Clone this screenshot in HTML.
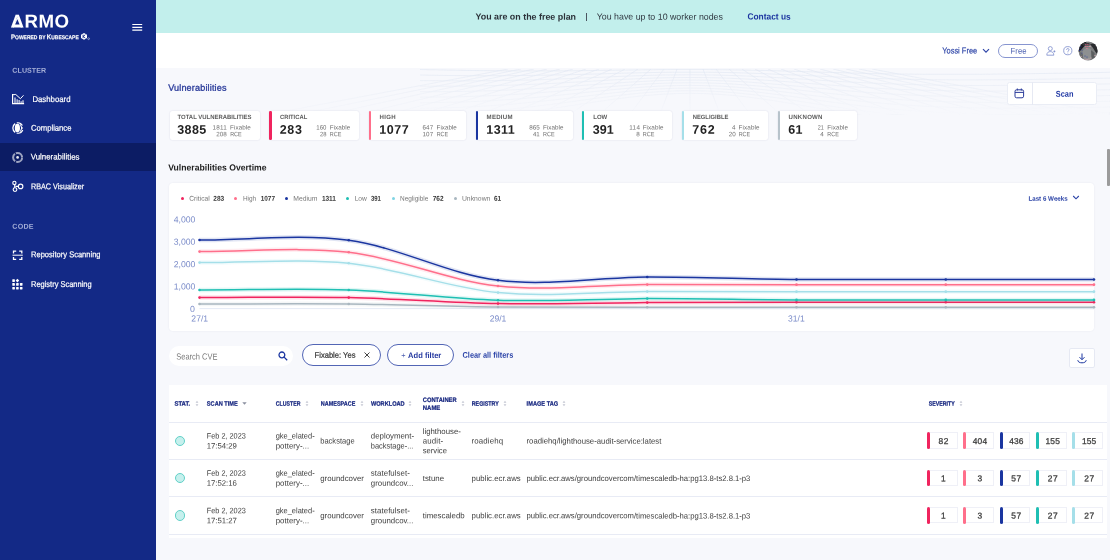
<!DOCTYPE html>
<html><head><meta charset="utf-8"><title>ARMO</title>
<style>
*{box-sizing:border-box;margin:0;padding:0}
html,body{width:1110px;height:560px;overflow:hidden;background:#f7f8fc;font-family:"Liberation Sans","DejaVu Sans",sans-serif;color:#333}
div,span{white-space:nowrap}
.t{position:absolute;left:0;top:0;line-height:1;transform-origin:0 0}
.a{position:absolute}
#root{position:absolute;left:0;top:0;width:1110px;height:560px;overflow:hidden;will-change:transform}
#side{position:absolute;left:0;top:0;width:156px;height:560px;background:#132986}
#banner{position:absolute;left:156px;top:0;width:954px;height:32.8px;background:#c2efec}
#topbar{position:absolute;left:156px;top:33px;width:954px;height:35px;background:#fff}
.card{position:absolute;top:110.5px;height:29.5px;background:#fff;border-radius:2px;box-shadow:0 0 1.5px rgba(20,30,90,.16)}
.bar{position:absolute;top:110.5px;width:2.3px;height:29.5px;border-radius:1.2px}
.pill{position:absolute;border:1px solid #5265b5;border-radius:12px;background:#fff}
.rowline{position:absolute;left:169px;width:937.5px;height:1px;background:#e8ebf5}
.badge{position:absolute;width:30.9px;height:16.2px;background:#fff;border:1px solid #eff0f7}
.bb{position:absolute;width:3px;height:16.8px;border-radius:1.5px}
</style></head><body><div id="root">

<div id="side"></div>
<div class="a" style="left:0;top:142.6px;width:156px;height:28.9px;background:#0c1c64"></div>
<div class="t" style="font-size:18.7px;color:#fff;letter-spacing:0.425px;font-weight:bold;transform:translate(10.56px,12.50px) rotate(.04deg);">ARMO</div>
<div class="t" style="font-size:5.8px;color:#fff;font-weight:bold;-webkit-text-stroke:0.15px #fff;transform:translate(11.05px,34.20px) rotate(.04deg) scaleX(0.8530);"><span style="font-size:7.1px">P</span>OWERED BY <span style="font-size:7.1px">K</span>UBESCAPE</div>
<svg class="a" style="left:0;top:0" width="156" height="45" viewBox="0 0 156 45"><path d="M12.800 27.600L17.350 16.500L21.900 27.600z" fill="#fff"/><path d="M17.350 19.300L19.600 24.500H15.100z" fill="#132986"/><path d="M84 33.100L87 34.800V38L84 39.700L81 38V34.800z" fill="#fff"/><path d="M83.100 34.700v3.400M85.300 34.700l-2 1.700l2 1.700" stroke="#132986" stroke-width=".9" fill="none"/><circle cx="88.600" cy="38.700" r=".9" fill="none" stroke="#fff" stroke-width=".45"/><path d="M132.300 24.500h9.900M132.300 27.300h9.900M132.300 30.100h9.900" stroke="#fff" stroke-width="1.200"/></svg>
<div class="t" style="font-size:7.1px;color:#a3add6;letter-spacing:0.052px;font-weight:bold;transform:translate(12.34px,67.80px) rotate(.04deg);">CLUSTER</div>
<div class="t" style="font-size:7.1px;color:#a3add6;letter-spacing:0.203px;font-weight:bold;transform:translate(12.34px,223.80px) rotate(.04deg);">CODE</div>
<svg class="a" style="left:0;top:0" width="40" height="110" viewBox="0 0 40 110" fill="none" stroke="#fff"><path d="M12.6 94.100V103.600H24.100" stroke-width="1.200"/><path d="M13 94.700L15.800 94.500L20.400 98.700L23.500 95.300" stroke-width="1"/><path d="M15 97.500V103.200M17.100 99.300V103.200M19.100 100V103.200M21.100 101.200V103.200M23 100.200V103.200" stroke-width="1.050"/></svg>
<div class="t" style="font-size:8.4px;color:#fff;-webkit-text-stroke:0.2px #fff;transform:translate(32.41px,94.90px) rotate(.04deg) scaleX(0.9306);">Dashboard</div>
<svg class="a" style="left:0;top:0" width="40" height="140" viewBox="0 0 40 140" fill="none" stroke="#fff"><path d="M15.200 123.600A5.300 5.300 0 0 0 15.200 132.400" stroke-width="1.300"/><path d="M16.800 122.900A5.300 5.300 0 0 1 22.400 125.600M22.800 130A5.300 5.300 0 0 1 16.600 133" stroke-width="1.100"/><ellipse cx="17.400" cy="128" rx="2.600" ry="4.300" fill="#fff" stroke="none"/><path d="M20.300 124.300A6 6 0 0 1 20.300 131.700" stroke-width="1"/><path d="M21 126.300L23.200 128L21 129.700z" fill="#fff" stroke="none"/></svg>
<div class="t" style="font-size:8.4px;color:#fff;-webkit-text-stroke:0.2px #fff;transform:translate(31.02px,123.80px) rotate(.04deg) scaleX(0.9142);">Compliance</div>
<svg class="a" style="left:0;top:0" width="40" height="170" viewBox="0 0 40 170" fill="none" stroke="#fff"><circle cx="17.600" cy="157.400" r="4.500" stroke-width="2" stroke-dasharray="8.400 1.030" opacity=".6"/><circle cx="17.600" cy="157.400" r="1.350" fill="#fff" stroke="none" opacity=".9"/></svg>
<div class="t" style="font-size:8.4px;color:#fff;-webkit-text-stroke:0.2px #fff;transform:translate(30.70px,152.60px) rotate(.04deg) scaleX(0.9423);">Vulnerabilities</div>
<svg class="a" style="left:0;top:0" width="40" height="200" viewBox="0 0 40 200" fill="none" stroke="#fff" stroke-width="1.150"><circle cx="14.400" cy="182.900" r="1.600"/><circle cx="15" cy="189.600" r="1.850"/><circle cx="20.600" cy="186.400" r="2.250"/><path d="M14.700 184.500V187.750M15.600 186.400H18.350"/></svg>
<div class="t" style="font-size:8.4px;color:#fff;-webkit-text-stroke:0.2px #fff;transform:translate(31.04px,182.20px) rotate(.04deg) scaleX(0.8589);">RBAC Visualizer</div>
<svg class="a" style="left:0;top:0" width="40" height="270" viewBox="0 0 40 270" fill="none" stroke="#fff"><path d="M13.500 253.600V251.100H16.200M19.200 251.100H21.800V253.600M13.500 256.900V259.400H16.200M19.200 259.400H21.800V256.900" stroke-width="1.300"/><path d="M12.500 255.200H22.800" stroke-width="1"/></svg>
<div class="t" style="font-size:8.4px;color:#fff;-webkit-text-stroke:0.2px #fff;transform:translate(31.02px,250.30px) rotate(.04deg) scaleX(0.8998);">Repository Scanning</div>
<svg class="a" style="left:0;top:0" width="40" height="300" viewBox="0 0 40 300" fill="#fff"><rect x="12.300" y="279.300" width="2.600" height="2.600" rx=".4"/><path d="M17.400 278.800L19.200 280.600L17.400 282.400L15.600 280.600z"/><rect x="12.300" y="283.100" width="2.600" height="2.600" rx=".4"/><rect x="16.100" y="283.100" width="2.600" height="2.600" rx=".4"/><rect x="19.900" y="283.100" width="2.600" height="2.600" rx=".4"/><rect x="12.300" y="286.900" width="2.600" height="2.600" rx=".4"/><rect x="16.100" y="286.900" width="2.600" height="2.600" rx=".4"/><rect x="19.900" y="286.900" width="2.600" height="2.600" rx=".4"/></svg>
<div class="t" style="font-size:8.4px;color:#fff;-webkit-text-stroke:0.2px #fff;transform:translate(31.03px,279.90px) rotate(.04deg) scaleX(0.8907);">Registry Scanning</div>
<div id="banner"></div>
<div class="t" style="font-size:8.9px;color:#2a3038;letter-spacing:0.007px;font-weight:bold;transform:translate(475.45px,12.60px) rotate(.04deg);">You are on the free plan</div>
<div class="a" style="left:586.2px;top:12.5px;width:.9px;height:8px;background:#4a5560"></div>
<div class="t" style="font-size:8.9px;color:#2f3740;transform:translate(596.76px,12.60px) rotate(.04deg) scaleX(0.9937);">You have up to 10 worker nodes</div>
<div class="t" style="font-size:8.9px;color:#1c35a0;font-weight:bold;transform:translate(747.48px,12.60px) rotate(.04deg) scaleX(0.9418);">Contact us</div>
<div id="topbar"></div>
<div class="t" style="font-size:8.6px;color:#3047a8;-webkit-text-stroke:0.2px #3047a8;transform:translate(942.23px,46.50px) rotate(.04deg) scaleX(0.8676);">Yossi Free</div>
<svg class="a" style="left:981.6px;top:48px" width="8" height="6" viewBox="0 0 8 6"><path d="M1 1.200L4 4.200L7 1.200" fill="none" stroke="#3047a8" stroke-width="1.200"/></svg>
<div class="a" style="left:998px;top:44.3px;width:40.3px;height:13.4px;border:1px solid #8795d0;border-radius:8px;background:#fff"></div>
<div class="t" style="font-size:8.5px;color:#4a5fb0;transform:translate(1010.61px,46.80px) rotate(.04deg) scaleX(0.9065);">Free</div>
<svg class="a" style="left:1046px;top:46px" width="10" height="10" viewBox="0 0 10 10" fill="none" stroke="#7b8ccc" stroke-width=".8"><circle cx="4.3" cy="2.600" r="2"/><path d="M.8 9.200c0-2.600 1.500-3.600 3.500-3.600s3.500 1 3.500 3.600z"/><path d="M7.400 5.400h2M8.400 4.400v2"/></svg>
<svg class="a" style="left:1062.700px;top:46.300px" width="10" height="10" viewBox="0 0 10 10" fill="none" stroke="#7b8ccc" stroke-width=".8"><circle cx="4.800" cy="4.700" r="4.100"/><path d="M3.500 3.800c0-1.700 2.600-1.700 2.600 0c0 1-1.300 1-1.300 2M4.800 6.700v.7"/></svg>
<svg class="a" style="left:1078px;top:40.600px" width="20" height="20" viewBox="0 0 20 20"><defs><clipPath id="av"><circle cx="10.100" cy="10" r="9.500"/></clipPath></defs><g clip-path="url(#av)"><rect width="20" height="20" fill="#7d7f80"/><path d="M0 0H9L6.500 5L3 9L0 12z" fill="#1e1f24"/><path d="M4 2H11.500V4.500H5z" fill="#3a3b3e"/><path d="M12 3L20 2V14L17.500 11L15 7z" fill="#2b2c2f"/><ellipse cx="9.500" cy="13" rx="5.500" ry="6" fill="#8e9091"/><path d="M13 9l3.500 3v5l-3 1z" fill="#5b5d5f"/><path d="M2 11l3 2v6H1z" fill="#6a6c6e"/><g fill="#ff6f97"><circle cx="7.900" cy="3.500" r=".55"/><circle cx="9.900" cy="3.500" r=".55"/><circle cx="7.900" cy="5.500" r=".6"/><circle cx="9.900" cy="5.500" r=".6"/><circle cx="8.900" cy="7.500" r=".6"/></g><g fill="#ffc3d0"><circle cx="12" cy="5.300" r=".6"/><circle cx="3" cy="15.500" r=".5"/><circle cx="7" cy="18.300" r=".5"/><circle cx="9" cy="18.600" r=".5"/><circle cx="11" cy="18" r=".5"/><circle cx="13" cy="17" r=".5"/><circle cx="17" cy="14.500" r=".5"/></g><g fill="#25379a"><circle cx="2.800" cy="5.500" r=".55"/><circle cx="2" cy="7.500" r=".5"/><circle cx="1.500" cy="9.500" r=".5"/><circle cx="4" cy="9" r=".5"/><circle cx="4" cy="12" r=".5"/><circle cx="7" cy="15" r=".5"/><circle cx="9" cy="16" r=".5"/></g></g></svg>
<svg class="a" style="left:0;top:69px" width="1110" height="46" viewBox="0 69 1110 46" fill="none" stroke="#dfe5f2" stroke-width=".6"><defs><linearGradient id="mg" x1="0" y1="0" x2="0" y2="1"><stop offset="0" stop-color="#fff" stop-opacity="1"/><stop offset="1" stop-color="#fff" stop-opacity="0"/></linearGradient><mask id="mm"><rect x="0" y="69" width="1110" height="46" fill="url(#mg)"/></mask></defs><g mask="url(#mm)"><polyline points="420,69.5 435,69.8 450,70.1 465,70.4 480,70.6 495,70.7 510,70.9 525,70.9 540,70.9 555,70.9 570,70.8 585,70.6 600,70.4 615,70.2 630,70.0 645,69.8 660,69.6 675,69.5 690,69.5 705,69.5 720,69.7 735,69.9 750,70.2 765,70.5 780,70.9 795,71.4 810,71.8 825,72.3 840,72.7 855,73.1 870,73.5 885,73.8 900,74.0 915,74.2 930,74.3 945,74.3 960,74.3 975,74.3 990,74.2 1005,74.0 1020,73.8 1035,73.6 1050,73.4 1065,73.2 1080,72.9 1095,72.6 1110,72.3"/><polyline points="420,75.0 435,75.3 450,75.5 465,75.6 480,75.7 495,75.7 510,75.6 525,75.5 540,75.3 555,75.0 570,74.7 585,74.3 600,73.9 615,73.4 630,73.0 645,72.7 660,72.4 675,72.2 690,72.2 705,72.2 720,72.4 735,72.7 750,73.2 765,73.7 780,74.4 795,75.0 810,75.7 825,76.4 840,77.1 855,77.7 870,78.3 885,78.7 900,79.1 915,79.4 930,79.7 945,79.8 960,79.9 975,79.9 990,79.8 1005,79.7 1020,79.6 1035,79.4 1050,79.2 1065,78.9 1080,78.7 1095,78.4 1110,78.1"/><polyline points="420,80.6 435,80.7 450,80.8 465,80.9 480,80.8 495,80.7 510,80.4 525,80.1 540,79.7 555,79.1 570,78.6 585,77.9 600,77.3 615,76.6 630,76.0 645,75.5 660,75.1 675,74.9 690,74.8 705,74.9 720,75.2 735,75.6 750,76.2 765,76.9 780,77.8 795,78.7 810,79.6 825,80.6 840,81.5 855,82.3 870,83.0 885,83.7 900,84.2 915,84.7 930,85.0 945,85.3 960,85.4 975,85.5 990,85.5 1005,85.4 1020,85.3 1035,85.1 1050,84.9 1065,84.7 1080,84.5 1095,84.2 1110,83.9"/><polyline points="420,86.1 435,86.2 450,86.2 465,86.1 480,85.9 495,85.6 510,85.2 525,84.7 540,84.0 555,83.3 570,82.4 585,81.6 600,80.7 615,79.8 630,79.1 645,78.4 660,77.9 675,77.6 690,77.5 705,77.6 720,77.9 735,78.5 750,79.2 765,80.2 780,81.2 795,82.3 810,83.5 825,84.7 840,85.8 855,86.9 870,87.8 885,88.7 900,89.4 915,89.9 930,90.4 945,90.7 960,91.0 975,91.1 990,91.1 1005,91.1 1020,91.0 1035,90.9 1050,90.7 1065,90.5 1080,90.2 1095,90.0 1110,89.7"/><polyline points="420,91.7 435,91.7 450,91.6 465,91.4 480,91.0 495,90.6 510,90.0 525,89.2 540,88.4 555,87.4 570,86.3 585,85.2 600,84.1 615,83.1 630,82.1 645,81.3 660,80.6 675,80.2 690,80.1 705,80.2 720,80.7 735,81.3 750,82.2 765,83.4 780,84.6 795,86.0 810,87.4 825,88.8 840,90.2 855,91.4 870,92.6 885,93.6 900,94.5 915,95.2 930,95.8 945,96.2 960,96.5 975,96.7 990,96.8 1005,96.8 1020,96.7 1035,96.6 1050,96.5 1065,96.3 1080,96.0 1095,95.8 1110,95.5"/><polyline points="420,97.2 435,97.1 450,97.0 465,96.6 480,96.1 495,95.5 510,94.7 525,93.8 540,92.7 555,91.5 570,90.2 585,88.9 600,87.5 615,86.3 630,85.1 645,84.1 660,83.4 675,82.9 690,82.8 705,82.9 720,83.4 735,84.2 750,85.3 765,86.6 780,88.0 795,89.6 810,91.3 825,92.9 840,94.5 855,96.0 870,97.4 885,98.6 900,99.6 915,100.5 930,101.1 945,101.7 960,102.1 975,102.3 990,102.5 1005,102.5 1020,102.5 1035,102.4 1050,102.2 1065,102.0 1080,101.8 1095,101.5 1110,101.3"/><polyline points="420,102.8 435,102.6 450,102.3 465,101.9 480,101.3 495,100.5 510,99.5 525,98.4 540,97.1 555,95.6 570,94.1 585,92.5 600,91.0 615,89.5 630,88.1 645,87.0 660,86.1 675,85.6 690,85.4 705,85.6 720,86.1 735,87.1 750,88.3 765,89.8 780,91.5 795,93.3 810,95.2 825,97.0 840,98.9 855,100.6 870,102.1 885,103.5 900,104.7 915,105.7 930,106.5 945,107.1 960,107.6 975,107.9 990,108.1 1005,108.2 1020,108.2 1035,108.1 1050,108.0 1065,107.8 1080,107.6 1095,107.3 1110,107.1"/><polyline points="420,108.3 435,108.1 450,107.7 465,107.1 480,106.4 495,105.4 510,104.3 525,102.9 540,101.4 555,99.8 570,98.0 585,96.2 600,94.4 615,92.7 630,91.1 645,89.9 660,88.9 675,88.3 690,88.1 705,88.3 720,88.9 735,89.9 750,91.3 765,93.0 780,94.9 795,96.9 810,99.1 825,101.2 840,103.2 855,105.1 870,106.9 885,108.5 900,109.8 915,111.0 930,111.9 945,112.6 960,113.2 975,113.5 990,113.8 1005,113.9 1020,113.9 1035,113.9 1050,113.8 1065,113.6 1080,113.4 1095,113.1 1110,112.9"/><polyline points="420,113.9 435,113.6 450,113.1 465,112.4 480,111.5 495,110.4 510,109.1 525,107.5 540,105.8 555,103.9 570,101.9 585,99.8 600,97.8 615,95.9 630,94.2 645,92.7 660,91.6 675,90.9 690,90.7 705,90.9 720,91.6 735,92.8 750,94.3 765,96.2 780,98.3 795,100.6 810,102.9 825,105.3 840,107.6 855,109.7 870,111.7 885,113.4 900,114.9 915,116.2 930,117.3 945,118.1 960,118.7 975,119.1 990,119.4 1005,119.6 1020,119.7 1035,119.6 1050,119.5 1065,119.4 1080,119.2 1095,118.9 1110,118.6"/><polyline points="420,119.4 435,119.0 450,118.4 465,117.6 480,116.6 495,115.3 510,113.8 525,112.1 540,110.1 555,108.0 570,105.8 585,103.5 600,101.2 615,99.1 630,97.2 645,95.6 660,94.4 675,93.6 690,93.3 705,93.6 720,94.4 735,95.6 750,97.3 765,99.4 780,101.7 795,104.2 810,106.8 825,109.4 840,111.9 855,114.3 870,116.5 885,118.4 900,120.1 915,121.5 930,122.6 945,123.5 960,124.3 975,124.8 990,125.1 1005,125.3 1020,125.4 1035,125.4 1050,125.3 1065,125.1 1080,124.9 1095,124.7 1110,124.4"/><path d="M508 69L270 114"/><path d="M521 69L300 114"/><path d="M534 69L330 114"/><path d="M547 69L360 114"/><path d="M560 69L390 114"/><path d="M573 69L420 114"/><path d="M586 69L450 114"/><path d="M599 69L480 114"/><path d="M612 69L510 114"/><path d="M625 69L540 114"/><path d="M638 69L570 114"/><path d="M651 69L600 114"/><path d="M664 69L630 114"/><path d="M677 69L660 114"/><path d="M690 69L690 114"/><path d="M703 69L720 114"/><path d="M716 69L750 114"/><path d="M729 69L780 114"/><path d="M742 69L810 114"/><path d="M755 69L840 114"/><path d="M768 69L870 114"/><path d="M781 69L900 114"/><path d="M794 69L930 114"/><path d="M807 69L960 114"/><path d="M820 69L990 114"/><path d="M833 69L1020 114"/><path d="M846 69L1050 114"/><path d="M859 69L1080 114"/><path d="M872 69L1110 114"/></g></svg>
<div class="t" style="font-size:9.1px;color:#2a3b9a;letter-spacing:0.152px;-webkit-text-stroke:0.3px #2a3b9a;transform:translate(168.14px,83.80px) rotate(.04deg);">Vulnerabilities</div>
<div class="a" style="left:1006.7px;top:81.6px;width:90.3px;height:23.8px;background:#fff;border:1px solid #eaedf5;border-radius:2.500px"></div>
<div class="a" style="left:1032px;top:82px;width:1px;height:23px;background:#e6e9f3"></div>
<svg class="a" style="left:1014.300px;top:88.200px" width="11" height="11" viewBox="0 0 11 11" fill="none" stroke="#2a3b9a" stroke-width="1"><rect x="1" y="1.800" width="8.600" height="8" rx="1.600"/><path d="M1 4.400h8.600M3.300 .5v2M7.300 .5v2"/></svg>
<div class="t" style="font-size:8.5px;color:#243ca6;font-weight:bold;transform:translate(1055.83px,89.80px) rotate(.04deg) scaleX(0.8683);">Scan</div>
<div class="card" style="left:169.5px;width:90.6px"></div>
<div class="t" style="font-size:6.1px;color:#5c5c5c;font-weight:bold;transform:translate(177.50px,114.00px) rotate(.04deg) scaleX(0.9758);">TOTAL VULNERABILITIES</div>
<div class="t" style="font-size:12.5px;color:#222;letter-spacing:0.412px;font-weight:bold;transform:translate(177.18px,123.70px) rotate(.04deg);">3885</div>
<div class="t" style="font-size:6.3px;color:#707070;letter-spacing:0.261px;transform:translate(212.38px,124.40px) rotate(.04deg);">1811</div>
<div class="t" style="font-size:6.3px;color:#707070;letter-spacing:0.007px;transform:translate(216.19px,131.30px) rotate(.04deg);">208</div>
<div class="t" style="font-size:6.3px;color:#707070;letter-spacing:0.053px;transform:translate(230.09px,124.40px) rotate(.04deg);">Fixable</div>
<div class="t" style="font-size:6.3px;color:#707070;transform:translate(230.13px,131.30px) rotate(.04deg) scaleX(0.8671);">RCE</div>
<div class="card" style="left:269.4px;width:89.8px"></div>
<div class="bar" style="left:269.4px;background:#f0245e"></div>
<div class="t" style="font-size:6.1px;color:#5c5c5c;font-weight:bold;transform:translate(280.01px,114.00px) rotate(.04deg) scaleX(0.9568);">CRITICAL</div>
<div class="t" style="font-size:12.5px;color:#222;letter-spacing:0.695px;font-weight:bold;transform:translate(279.68px,123.70px) rotate(.04deg);">283</div>
<div class="t" style="font-size:6.3px;color:#707070;transform:translate(316.30px,124.40px) rotate(.04deg) scaleX(0.9633);">160</div>
<div class="t" style="font-size:6.3px;color:#707070;transform:translate(319.91px,131.30px) rotate(.04deg) scaleX(0.9308);">28</div>
<div class="t" style="font-size:6.3px;color:#707070;letter-spacing:0.020px;transform:translate(329.79px,124.40px) rotate(.04deg);">Fixable</div>
<div class="t" style="font-size:6.3px;color:#707070;transform:translate(329.83px,131.30px) rotate(.04deg) scaleX(0.8671);">RCE</div>
<div class="card" style="left:368.9px;width:97.1px"></div>
<div class="bar" style="left:368.9px;background:#ff6f8b"></div>
<div class="t" style="font-size:6.1px;color:#5c5c5c;letter-spacing:0.292px;font-weight:bold;transform:translate(379.50px,114.00px) rotate(.04deg);">HIGH</div>
<div class="t" style="font-size:12.5px;color:#222;letter-spacing:0.612px;font-weight:bold;transform:translate(379.18px,123.70px) rotate(.04deg);">1077</div>
<div class="t" style="font-size:6.3px;color:#707070;letter-spacing:0.107px;transform:translate(422.49px,124.40px) rotate(.04deg);">647</div>
<div class="t" style="font-size:6.3px;color:#707070;letter-spacing:0.107px;transform:translate(422.49px,131.30px) rotate(.04deg);">107</div>
<div class="t" style="font-size:6.3px;color:#707070;transform:translate(436.59px,124.40px) rotate(.04deg) scaleX(0.9959);">Fixable</div>
<div class="t" style="font-size:6.3px;color:#707070;transform:translate(436.63px,131.30px) rotate(.04deg) scaleX(0.8671);">RCE</div>
<div class="card" style="left:476px;width:97.1px"></div>
<div class="bar" style="left:476px;background:#1a35a0"></div>
<div class="t" style="font-size:6.1px;color:#5c5c5c;letter-spacing:0.238px;font-weight:bold;transform:translate(486.59px,114.00px) rotate(.04deg);">MEDIUM</div>
<div class="t" style="font-size:12.5px;color:#222;letter-spacing:0.475px;font-weight:bold;transform:translate(486.27px,123.70px) rotate(.04deg);">1311</div>
<div class="t" style="font-size:6.3px;color:#707070;letter-spacing:0.007px;transform:translate(529.18px,124.40px) rotate(.04deg);">865</div>
<div class="t" style="font-size:6.3px;color:#707070;transform:translate(532.89px,131.30px) rotate(.04deg) scaleX(0.9735);">41</div>
<div class="t" style="font-size:6.3px;color:#707070;letter-spacing:0.036px;transform:translate(542.98px,124.40px) rotate(.04deg);">Fixable</div>
<div class="t" style="font-size:6.3px;color:#707070;transform:translate(543.03px,131.30px) rotate(.04deg) scaleX(0.8671);">RCE</div>
<div class="card" style="left:582.2px;width:89.7px"></div>
<div class="bar" style="left:582.2px;background:#1fbfb3"></div>
<div class="t" style="font-size:6.1px;color:#5c5c5c;font-weight:bold;transform:translate(593.20px,114.00px) rotate(.04deg) scaleX(0.9924);">LOW</div>
<div class="t" style="font-size:12.5px;color:#222;letter-spacing:0.045px;font-weight:bold;transform:translate(592.88px,123.70px) rotate(.04deg);">391</div>
<div class="t" style="font-size:6.3px;color:#707070;letter-spacing:0.392px;transform:translate(629.18px,124.40px) rotate(.04deg);">114</div>
<div class="t" style="font-size:6.3px;color:#707070;transform:translate(636.18px,131.30px) rotate(.04deg);">8</div>
<div class="t" style="font-size:6.3px;color:#707070;letter-spacing:0.086px;transform:translate(642.68px,124.40px) rotate(.04deg);">Fixable</div>
<div class="t" style="font-size:6.3px;color:#707070;transform:translate(642.72px,131.30px) rotate(.04deg) scaleX(0.8746);">RCE</div>
<div class="card" style="left:682.2px;width:85.9px"></div>
<div class="bar" style="left:682.2px;background:#a5dfe9"></div>
<div class="t" style="font-size:6.1px;color:#5c5c5c;font-weight:bold;transform:translate(692.71px,114.00px) rotate(.04deg) scaleX(0.9587);">NEGLIGIBLE</div>
<div class="t" style="font-size:12.5px;color:#222;letter-spacing:0.695px;font-weight:bold;transform:translate(692.38px,123.70px) rotate(.04deg);">762</div>
<div class="t" style="font-size:6.3px;color:#707070;transform:translate(731.88px,124.40px) rotate(.04deg);">4</div>
<div class="t" style="font-size:6.3px;color:#707070;letter-spacing:0.014px;transform:translate(728.68px,131.30px) rotate(.04deg);">20</div>
<div class="t" style="font-size:6.3px;color:#707070;letter-spacing:0.103px;transform:translate(738.58px,124.40px) rotate(.04deg);">Fixable</div>
<div class="t" style="font-size:6.3px;color:#707070;transform:translate(738.63px,131.30px) rotate(.04deg) scaleX(0.8671);">RCE</div>
<div class="card" style="left:778.1px;width:78.9px"></div>
<div class="bar" style="left:778.1px;background:#b7c3cb"></div>
<div class="t" style="font-size:6.1px;color:#5c5c5c;letter-spacing:0.235px;font-weight:bold;transform:translate(788.60px,114.00px) rotate(.04deg);">UNKNOWN</div>
<div class="t" style="font-size:12.5px;color:#222;letter-spacing:0.344px;font-weight:bold;transform:translate(788.27px,123.70px) rotate(.04deg);">61</div>
<div class="t" style="font-size:6.3px;color:#707070;transform:translate(817.83px,124.40px) rotate(.04deg) scaleX(0.8595);">21</div>
<div class="t" style="font-size:6.3px;color:#707070;transform:translate(820.18px,131.30px) rotate(.04deg);">4</div>
<div class="t" style="font-size:6.3px;color:#707070;letter-spacing:0.086px;transform:translate(827.28px,124.40px) rotate(.04deg);">Fixable</div>
<div class="t" style="font-size:6.3px;color:#707070;transform:translate(827.33px,131.30px) rotate(.04deg) scaleX(0.8671);">RCE</div>
<div class="t" style="font-size:8.9px;color:#222;font-weight:bold;transform:translate(168.17px,163.40px) rotate(.04deg) scaleX(0.9715);">Vulnerabilities Overtime</div>
<div class="a" style="left:169px;top:183px;width:924.8px;height:148px;background:#fff;border-radius:4px;box-shadow:0 0 2px rgba(20,30,90,.08)"></div>
<div class="a" style="left:180.6px;top:196.600px;width:3.400px;height:3.400px;border-radius:2px;background:#f0245e"></div>
<div class="t" style="font-size:7.0px;color:#777;transform:translate(189.27px,194.80px) rotate(.04deg) scaleX(0.9537);">Critical</div>
<div class="t" style="font-size:7.0px;color:#333;font-weight:bold;transform:translate(213.27px,194.80px) rotate(.04deg) scaleX(0.9326);">283</div>
<div class="a" style="left:234.0px;top:196.600px;width:3.400px;height:3.400px;border-radius:2px;background:#ff6f8b"></div>
<div class="t" style="font-size:7.0px;color:#777;transform:translate(242.88px,194.80px) rotate(.04deg) scaleX(0.9232);">High</div>
<div class="t" style="font-size:7.0px;color:#333;font-weight:bold;transform:translate(260.68px,194.80px) rotate(.04deg) scaleX(0.9180);">1077</div>
<div class="a" style="left:284.8px;top:196.600px;width:3.400px;height:3.400px;border-radius:2px;background:#1a35a0"></div>
<div class="t" style="font-size:7.0px;color:#777;transform:translate(293.26px,194.80px) rotate(.04deg) scaleX(0.9757);">Medium</div>
<div class="t" style="font-size:7.0px;color:#333;font-weight:bold;transform:translate(321.88px,194.80px) rotate(.04deg) scaleX(0.9284);">1311</div>
<div class="a" style="left:345.8px;top:196.600px;width:3.400px;height:3.400px;border-radius:2px;background:#1fbfb3"></div>
<div class="t" style="font-size:7.0px;color:#777;transform:translate(354.67px,194.80px) rotate(.04deg) scaleX(0.9499);">Low</div>
<div class="t" style="font-size:7.0px;color:#333;font-weight:bold;transform:translate(370.90px,194.80px) rotate(.04deg) scaleX(0.8556);">391</div>
<div class="a" style="left:391.8px;top:196.600px;width:3.400px;height:3.400px;border-radius:2px;background:#7fd4e3"></div>
<div class="t" style="font-size:7.0px;color:#777;transform:translate(399.98px,194.80px) rotate(.04deg) scaleX(0.9236);">Negligible</div>
<div class="t" style="font-size:7.0px;color:#333;font-weight:bold;transform:translate(432.67px,194.80px) rotate(.04deg) scaleX(0.9326);">762</div>
<div class="a" style="left:453.6px;top:196.600px;width:3.400px;height:3.400px;border-radius:2px;background:#a9b7c0"></div>
<div class="t" style="font-size:7.0px;color:#777;transform:translate(461.96px,194.80px) rotate(.04deg) scaleX(0.9730);">Unknown</div>
<div class="t" style="font-size:7.0px;color:#333;font-weight:bold;transform:translate(493.98px,194.80px) rotate(.04deg) scaleX(0.9106);">61</div>
<div class="t" style="font-size:6.6px;color:#2a42a6;font-weight:bold;transform:translate(1028.39px,195.70px) rotate(.04deg) scaleX(0.9445);">Last 6 Weeks</div>
<svg class="a" style="left:1071.900px;top:194.800px" width="8" height="6" viewBox="0 0 8 6"><path d="M1.200 1L4 3.800L6.800 1" fill="none" stroke="#2a42a6" stroke-width="1.100"/></svg>
<svg class="a" style="left:0;top:0" width="1110" height="560" viewBox="0 0 1110 560" fill="none"><path d="M199.500 308.600H1094" stroke="#dde3f3" stroke-width=".8"/><path d="M199.5 304.04C249.2 304.04 299.0 303.54 348.8 304.04C398.5 304.54 448.2 306.50 498.0 307.04C547.8 307.58 597.5 307.23 647.2 307.27C697.0 307.30 746.8 307.25 796.5 307.24C846.2 307.24 896.0 307.24 945.8 307.24C995.2 307.24 1044.6 307.24 1094.0 307.24" stroke="#a9b7c0" stroke-width="4.500" opacity=".13"/><path d="M199.5 304.04C249.2 304.04 299.0 303.54 348.8 304.04C398.5 304.54 448.2 306.50 498.0 307.04C547.8 307.58 597.5 307.23 647.2 307.27C697.0 307.30 746.8 307.25 796.5 307.24C846.2 307.24 896.0 307.24 945.8 307.24C995.2 307.24 1044.6 307.24 1094.0 307.24" stroke="#a9b7c0" stroke-width="1.500"/><circle cx="199.5" cy="304.04" r="1.300" fill="#a9b7c0"/><circle cx="348.75" cy="304.04" r="1.300" fill="#a9b7c0"/><circle cx="498" cy="307.04" r="1.300" fill="#a9b7c0"/><circle cx="647.25" cy="307.27" r="1.300" fill="#a9b7c0"/><circle cx="796.5" cy="307.24" r="1.300" fill="#a9b7c0"/><circle cx="945.75" cy="307.24" r="1.300" fill="#a9b7c0"/><circle cx="1094" cy="307.24" r="1.300" fill="#a9b7c0"/><path d="M199.5 297.59C249.2 297.59 299.0 296.59 348.8 297.59C398.5 298.59 448.2 302.76 498.0 303.59C547.8 304.43 597.5 302.81 647.2 302.59C697.0 302.38 746.8 302.35 796.5 302.30C846.2 302.26 896.0 302.30 945.8 302.30C995.2 302.30 1044.6 302.30 1094.0 302.30" stroke="#f0245e" stroke-width="4.500" opacity=".13"/><path d="M199.5 297.59C249.2 297.59 299.0 296.59 348.8 297.59C398.5 298.59 448.2 302.76 498.0 303.59C547.8 304.43 597.5 302.81 647.2 302.59C697.0 302.38 746.8 302.35 796.5 302.30C846.2 302.26 896.0 302.30 945.8 302.30C995.2 302.30 1044.6 302.30 1094.0 302.30" stroke="#f0245e" stroke-width="1.500"/><circle cx="199.5" cy="297.59" r="1.300" fill="#f0245e"/><circle cx="348.75" cy="297.59" r="1.300" fill="#f0245e"/><circle cx="498" cy="303.59" r="1.300" fill="#f0245e"/><circle cx="647.25" cy="302.59" r="1.300" fill="#f0245e"/><circle cx="796.5" cy="302.30" r="1.300" fill="#f0245e"/><circle cx="945.75" cy="302.30" r="1.300" fill="#f0245e"/><circle cx="1094" cy="302.30" r="1.300" fill="#f0245e"/><path d="M199.5 290.00C249.2 290.00 299.0 288.28 348.8 290.00C398.5 291.72 448.2 298.87 498.0 300.30C547.8 301.73 597.5 298.65 647.2 298.59C697.0 298.52 746.8 299.68 796.5 299.90C846.2 300.12 896.0 299.90 945.8 299.90C995.2 299.90 1044.6 299.90 1094.0 299.90" stroke="#1fbfb3" stroke-width="4.500" opacity=".13"/><path d="M199.5 290.00C249.2 290.00 299.0 288.28 348.8 290.00C398.5 291.72 448.2 298.87 498.0 300.30C547.8 301.73 597.5 298.65 647.2 298.59C697.0 298.52 746.8 299.68 796.5 299.90C846.2 300.12 896.0 299.90 945.8 299.90C995.2 299.90 1044.6 299.90 1094.0 299.90" stroke="#1fbfb3" stroke-width="1.500"/><circle cx="199.5" cy="290.00" r="1.300" fill="#1fbfb3"/><circle cx="348.75" cy="290.00" r="1.300" fill="#1fbfb3"/><circle cx="498" cy="300.30" r="1.300" fill="#1fbfb3"/><circle cx="647.25" cy="298.59" r="1.300" fill="#1fbfb3"/><circle cx="796.5" cy="299.90" r="1.300" fill="#1fbfb3"/><circle cx="945.75" cy="299.90" r="1.300" fill="#1fbfb3"/><circle cx="1094" cy="299.90" r="1.300" fill="#1fbfb3"/><path d="M199.5 262.61C249.2 262.84 299.0 258.30 348.8 263.30C398.5 268.30 448.2 287.89 498.0 292.60C547.8 297.32 597.5 291.76 647.2 291.60C697.0 291.44 746.8 291.64 796.5 291.65C846.2 291.65 896.0 291.65 945.8 291.65C995.2 291.65 1044.6 291.65 1094.0 291.65" stroke="#a5dfe9" stroke-width="4.500" opacity=".13"/><path d="M199.5 262.61C249.2 262.84 299.0 258.30 348.8 263.30C398.5 268.30 448.2 287.89 498.0 292.60C547.8 297.32 597.5 291.76 647.2 291.60C697.0 291.44 746.8 291.64 796.5 291.65C846.2 291.65 896.0 291.65 945.8 291.65C995.2 291.65 1044.6 291.65 1094.0 291.65" stroke="#a5dfe9" stroke-width="1.500"/><circle cx="199.5" cy="262.61" r="1.300" fill="#a5dfe9"/><circle cx="348.75" cy="263.30" r="1.300" fill="#a5dfe9"/><circle cx="498" cy="292.60" r="1.300" fill="#a5dfe9"/><circle cx="647.25" cy="291.60" r="1.300" fill="#a5dfe9"/><circle cx="796.5" cy="291.65" r="1.300" fill="#a5dfe9"/><circle cx="945.75" cy="291.65" r="1.300" fill="#a5dfe9"/><circle cx="1094" cy="291.65" r="1.300" fill="#a5dfe9"/><path d="M199.5 251.60C249.2 251.83 299.0 246.57 348.8 252.31C398.5 258.04 448.2 280.61 498.0 285.99C547.8 291.37 597.5 284.82 647.2 284.59C697.0 284.37 746.8 284.63 796.5 284.64C846.2 284.64 896.0 284.64 945.8 284.64C995.2 284.64 1044.6 284.64 1094.0 284.64" stroke="#ff6f8b" stroke-width="4.500" opacity=".13"/><path d="M199.5 251.60C249.2 251.83 299.0 246.57 348.8 252.31C398.5 258.04 448.2 280.61 498.0 285.99C547.8 291.37 597.5 284.82 647.2 284.59C697.0 284.37 746.8 284.63 796.5 284.64C846.2 284.64 896.0 284.64 945.8 284.64C995.2 284.64 1044.6 284.64 1094.0 284.64" stroke="#ff6f8b" stroke-width="1.500"/><circle cx="199.5" cy="251.60" r="1.300" fill="#ff6f8b"/><circle cx="348.75" cy="252.31" r="1.300" fill="#ff6f8b"/><circle cx="498" cy="285.99" r="1.300" fill="#ff6f8b"/><circle cx="647.25" cy="284.59" r="1.300" fill="#ff6f8b"/><circle cx="796.5" cy="284.64" r="1.300" fill="#ff6f8b"/><circle cx="945.75" cy="284.64" r="1.300" fill="#ff6f8b"/><circle cx="1094" cy="284.64" r="1.300" fill="#ff6f8b"/><path d="M199.5 240.00C249.2 240.10 299.0 233.58 348.8 240.29C398.5 247.01 448.2 274.18 498.0 280.30C547.8 286.42 597.5 277.15 647.2 277.00C697.0 276.86 746.8 279.03 796.5 279.43C846.2 279.83 896.0 279.43 945.8 279.43C995.2 279.43 1044.6 279.43 1094.0 279.43" stroke="#1a35a0" stroke-width="4.500" opacity=".13"/><path d="M199.5 240.00C249.2 240.10 299.0 233.58 348.8 240.29C398.5 247.01 448.2 274.18 498.0 280.30C547.8 286.42 597.5 277.15 647.2 277.00C697.0 276.86 746.8 279.03 796.5 279.43C846.2 279.83 896.0 279.43 945.8 279.43C995.2 279.43 1044.6 279.43 1094.0 279.43" stroke="#1a35a0" stroke-width="1.500"/><circle cx="199.5" cy="240.00" r="1.300" fill="#1a35a0"/><circle cx="348.75" cy="240.29" r="1.300" fill="#1a35a0"/><circle cx="498" cy="280.30" r="1.300" fill="#1a35a0"/><circle cx="647.25" cy="277.00" r="1.300" fill="#1a35a0"/><circle cx="796.5" cy="279.43" r="1.300" fill="#1a35a0"/><circle cx="945.75" cy="279.43" r="1.300" fill="#1a35a0"/><circle cx="1094" cy="279.43" r="1.300" fill="#1a35a0"/></svg>
<div class="t" style="font-size:8.8px;color:#7b8cc9;transform:translate(173.66px,215.40px) rotate(.04deg) scaleX(0.9893);">4,000</div>
<div class="t" style="font-size:8.8px;color:#7b8cc9;transform:translate(173.66px,237.80px) rotate(.04deg) scaleX(0.9893);">3,000</div>
<div class="t" style="font-size:8.8px;color:#7b8cc9;transform:translate(173.66px,260.15px) rotate(.04deg) scaleX(0.9893);">2,000</div>
<div class="t" style="font-size:8.8px;color:#7b8cc9;transform:translate(173.66px,282.50px) rotate(.04deg) scaleX(0.9893);">1,000</div>
<div class="t" style="font-size:8.8px;color:#7b8cc9;transform:translate(190.06px,304.90px) rotate(.04deg);">0</div>
<div class="t" style="font-size:8.8px;color:#7b8cc9;transform:translate(191.37px,314.40px) rotate(.04deg) scaleX(0.9740);">27/1</div>
<div class="t" style="font-size:8.8px;color:#7b8cc9;transform:translate(489.67px,314.40px) rotate(.04deg) scaleX(0.9740);">29/1</div>
<div class="t" style="font-size:8.8px;color:#7b8cc9;transform:translate(787.97px,314.40px) rotate(.04deg) scaleX(0.9740);">31/1</div>
<div class="a" style="left:169.3px;top:345.700px;width:123.400px;height:20.300px;background:#fff;border-radius:10.500px"></div>
<div class="t" style="font-size:8.8px;color:#7a7a7a;transform:translate(176.33px,352.60px) rotate(.04deg) scaleX(0.8487);">Search CVE</div>
<svg class="a" style="left:278px;top:351px" width="10" height="10" viewBox="0 0 10 10" fill="none" stroke="#1a35a0" stroke-width="1.300"><circle cx="3.900" cy="3.900" r="2.900"/><path d="M6.100 6.100L9.200 9.200"/></svg>
<div class="pill" style="left:301.500px;top:344.300px;width:79.300px;height:21.700px"></div>
<div class="t" style="font-size:8.0px;color:#3a3a3a;-webkit-text-stroke:0.25px #3a3a3a;transform:translate(314.62px,351.80px) rotate(.04deg) scaleX(0.9457);">Fixable: Yes</div>
<svg class="a" style="left:364.300px;top:352.300px" width="6" height="6" viewBox="0 0 6 6"><path d="M.5.500l5 5M5.500.500l-5 5" stroke="#444" stroke-width="1"/></svg>
<div class="pill" style="left:386.600px;top:344.300px;width:67.600px;height:21.700px"></div>
<div class="t" style="font-size:8.0px;color:#4a5cb0;transform:translate(401.13px,352.00px) rotate(.04deg) scaleX(0.9204);">+</div>
<div class="t" style="font-size:8.0px;color:#2438a0;font-weight:bold;transform:translate(408.12px,352.00px) rotate(.04deg) scaleX(0.9456);">Add filter</div>
<div class="t" style="font-size:8.3px;color:#2c44a8;font-weight:bold;transform:translate(462.53px,350.80px) rotate(.04deg) scaleX(0.8871);">Clear all filters</div>
<div class="a" style="left:1069px;top:348.300px;width:25.500px;height:20px;background:#fff;border:1px solid #e6e9f3;border-radius:2px"></div>
<svg class="a" style="left:1077px;top:353px" width="10" height="11" viewBox="0 0 10 11" fill="none" stroke="#1a35a0" stroke-width="1"><path d="M5 .5v6M2.500 4.200L5 6.700l2.500-2.500"/><path d="M.8 7.200c0 3.500 8.400 3.500 8.400 0"/></svg>
<div class="a" style="left:168.800px;top:385px;width:937.800px;height:153px;background:#fff"></div>
<div class="rowline" style="top:421.7px"></div>
<div class="rowline" style="top:458.8px"></div>
<div class="rowline" style="top:496px"></div>
<div class="rowline" style="top:533.5px"></div>
<div class="t" style="font-size:6.4px;color:#15257f;font-weight:bold;-webkit-text-stroke:0.22px #15257f;transform:translate(174.40px,400.80px) rotate(.04deg) scaleX(0.9362);">STAT.</div>
<svg class="a" style="left:194.8px;top:399.8px" width="4" height="7" viewBox="0 0 4 7"><path d="M.6 2.700L2 .7L3.400 2.700zM.6 4.300L2 6.300L3.400 4.300z" fill="#c3c6d2"/></svg>
<div class="t" style="font-size:6.4px;color:#15257f;font-weight:bold;-webkit-text-stroke:0.22px #15257f;transform:translate(206.82px,400.80px) rotate(.04deg) scaleX(0.8801);">SCAN TIME</div>
<div class="t" style="font-size:6.4px;color:#15257f;font-weight:bold;-webkit-text-stroke:0.22px #15257f;transform:translate(275.84px,400.80px) rotate(.04deg) scaleX(0.8162);">CLUSTER</div>
<svg class="a" style="left:304.6px;top:399.8px" width="4" height="7" viewBox="0 0 4 7"><path d="M.6 2.700L2 .7L3.400 2.700zM.6 4.300L2 6.300L3.400 4.300z" fill="#c3c6d2"/></svg>
<div class="t" style="font-size:6.4px;color:#15257f;font-weight:bold;-webkit-text-stroke:0.22px #15257f;transform:translate(320.83px,400.80px) rotate(.04deg) scaleX(0.8558);">NAMESPACE</div>
<svg class="a" style="left:359.5px;top:399.8px" width="4" height="7" viewBox="0 0 4 7"><path d="M.6 2.700L2 .7L3.400 2.700zM.6 4.300L2 6.300L3.400 4.300z" fill="#c3c6d2"/></svg>
<div class="t" style="font-size:6.4px;color:#15257f;font-weight:bold;-webkit-text-stroke:0.22px #15257f;transform:translate(370.92px,400.80px) rotate(.04deg) scaleX(0.8799);">WORKLOAD</div>
<svg class="a" style="left:408.4px;top:399.8px" width="4" height="7" viewBox="0 0 4 7"><path d="M.6 2.700L2 .7L3.400 2.700zM.6 4.300L2 6.300L3.400 4.300z" fill="#c3c6d2"/></svg>
<div class="t" style="font-size:6.4px;color:#15257f;font-weight:bold;-webkit-text-stroke:0.22px #15257f;transform:translate(471.73px,400.80px) rotate(.04deg) scaleX(0.8336);">REGISTRY</div>
<svg class="a" style="left:503.3px;top:399.8px" width="4" height="7" viewBox="0 0 4 7"><path d="M.6 2.700L2 .7L3.400 2.700zM.6 4.300L2 6.300L3.400 4.300z" fill="#c3c6d2"/></svg>
<div class="t" style="font-size:6.4px;color:#15257f;font-weight:bold;-webkit-text-stroke:0.22px #15257f;transform:translate(526.62px,400.80px) rotate(.04deg) scaleX(0.8822);">IMAGE TAG</div>
<svg class="a" style="left:561.9px;top:399.8px" width="4" height="7" viewBox="0 0 4 7"><path d="M.6 2.700L2 .7L3.400 2.700zM.6 4.300L2 6.300L3.400 4.300z" fill="#c3c6d2"/></svg>
<div class="t" style="font-size:6.4px;color:#15257f;font-weight:bold;-webkit-text-stroke:0.22px #15257f;transform:translate(928.64px,400.80px) rotate(.04deg) scaleX(0.8238);">SEVERITY</div>
<svg class="a" style="left:958.9px;top:399.8px" width="4" height="7" viewBox="0 0 4 7"><path d="M.6 2.700L2 .7L3.400 2.700zM.6 4.300L2 6.300L3.400 4.300z" fill="#c3c6d2"/></svg>
<div class="t" style="font-size:6.4px;color:#15257f;font-weight:bold;-webkit-text-stroke:0.22px #15257f;transform:translate(422.81px,396.90px) rotate(.04deg) scaleX(0.8994);">CONTAINER</div>
<div class="t" style="font-size:6.4px;color:#15257f;font-weight:bold;-webkit-text-stroke:0.22px #15257f;transform:translate(422.80px,404.90px) rotate(.04deg) scaleX(0.9316);">NAME</div>
<svg class="a" style="left:460.7px;top:399.8px" width="4" height="7" viewBox="0 0 4 7"><path d="M.6 2.700L2 .7L3.400 2.700zM.6 4.300L2 6.300L3.400 4.300z" fill="#c3c6d2"/></svg>
<svg class="a" style="left:241.600px;top:402px" width="5" height="3" viewBox="0 0 5 3"><path d="M.3.300h4.400L2.500 2.800z" fill="#8b90a0"/></svg>
<div class="a" style="left:174.500px;top:435.7px;width:10.400px;height:10.400px;border-radius:5.200px;background:#c6f0ed;border:1px solid #62d1c8"></div>
<div class="t" style="font-size:7.9px;color:#404040;transform:translate(206.73px,432.50px) rotate(.04deg) scaleX(0.9280);">Feb 2, 2023</div>
<div class="t" style="font-size:7.9px;color:#404040;transform:translate(206.71px,442.50px) rotate(.04deg) scaleX(0.9828);">17:54:29</div>
<div class="t" style="font-size:7.9px;color:#404040;transform:translate(275.73px,432.50px) rotate(.04deg) scaleX(0.9428);">gke_elated-</div>
<div class="t" style="font-size:7.9px;color:#404040;letter-spacing:0.016px;transform:translate(275.71px,442.50px) rotate(.04deg);">pottery-...</div>
<div class="t" style="font-size:7.9px;color:#404040;transform:translate(320.22px,437.60px) rotate(.04deg) scaleX(0.9557);">backstage</div>
<div class="t" style="font-size:7.9px;color:#404040;transform:translate(370.81px,432.50px) rotate(.04deg) scaleX(0.9947);">deployment-</div>
<div class="t" style="font-size:7.9px;color:#404040;transform:translate(370.83px,442.50px) rotate(.04deg) scaleX(0.9425);">backstage-...</div>
<div class="t" style="font-size:7.9px;color:#404040;transform:translate(422.71px,427.90px) rotate(.04deg) scaleX(0.9891);">lighthouse-</div>
<div class="t" style="font-size:7.9px;color:#404040;letter-spacing:0.148px;transform:translate(422.71px,437.60px) rotate(.04deg);">audit-</div>
<div class="t" style="font-size:7.9px;color:#404040;transform:translate(422.72px,447.30px) rotate(.04deg) scaleX(0.9676);">service</div>
<div class="t" style="font-size:7.9px;color:#404040;letter-spacing:0.110px;transform:translate(471.61px,437.60px) rotate(.04deg);">roadiehq</div>
<div class="t" style="font-size:7.9px;color:#404040;transform:translate(526.51px,437.60px) rotate(.04deg) scaleX(0.9825);">roadiehq/lighthouse-audit-service:latest</div>
<div class="badge" style="left:926.7px;top:432.4px"></div><div class="bb" style="left:926.7px;top:432.2px;background:#f0245e"></div>
<div class="t" style="font-size:8.4px;color:#3c3c3c;letter-spacing:0.612px;-webkit-text-stroke:0.28px #3c3c3c;transform:translate(938.53px,436.90px) rotate(.04deg);">82</div>
<div class="badge" style="left:963.1px;top:432.4px"></div><div class="bb" style="left:963.1px;top:432.2px;background:#ff6f8b"></div>
<div class="t" style="font-size:8.4px;color:#3c3c3c;letter-spacing:0.178px;-webkit-text-stroke:0.28px #3c3c3c;transform:translate(972.73px,436.90px) rotate(.04deg);">404</div>
<div class="badge" style="left:999.5px;top:432.4px"></div><div class="bb" style="left:999.5px;top:432.2px;background:#1a35a0"></div>
<div class="t" style="font-size:8.4px;color:#3c3c3c;letter-spacing:0.178px;-webkit-text-stroke:0.28px #3c3c3c;transform:translate(1009.13px,436.90px) rotate(.04deg);">436</div>
<div class="badge" style="left:1035.9px;top:432.4px"></div><div class="bb" style="left:1035.9px;top:432.2px;background:#1fbfb3"></div>
<div class="t" style="font-size:8.4px;color:#3c3c3c;letter-spacing:0.178px;-webkit-text-stroke:0.28px #3c3c3c;transform:translate(1045.53px,436.90px) rotate(.04deg);">155</div>
<div class="badge" style="left:1072.3px;top:432.4px"></div><div class="bb" style="left:1072.3px;top:432.2px;background:#a5dfe9"></div>
<div class="t" style="font-size:8.4px;color:#3c3c3c;letter-spacing:0.178px;-webkit-text-stroke:0.28px #3c3c3c;transform:translate(1081.93px,436.90px) rotate(.04deg);">155</div>
<div class="a" style="left:174.500px;top:473.0px;width:10.400px;height:10.400px;border-radius:5.200px;background:#c6f0ed;border:1px solid #62d1c8"></div>
<div class="t" style="font-size:7.9px;color:#404040;transform:translate(206.73px,469.80px) rotate(.04deg) scaleX(0.9280);">Feb 2, 2023</div>
<div class="t" style="font-size:7.9px;color:#404040;transform:translate(206.71px,479.80px) rotate(.04deg) scaleX(0.9828);">17:52:16</div>
<div class="t" style="font-size:7.9px;color:#404040;transform:translate(275.73px,469.80px) rotate(.04deg) scaleX(0.9428);">gke_elated-</div>
<div class="t" style="font-size:7.9px;color:#404040;letter-spacing:0.016px;transform:translate(275.71px,479.80px) rotate(.04deg);">pottery-...</div>
<div class="t" style="font-size:7.9px;color:#404040;transform:translate(320.21px,474.90px) rotate(.04deg) scaleX(0.9958);">groundcover</div>
<div class="t" style="font-size:7.9px;color:#404040;letter-spacing:0.044px;transform:translate(370.81px,469.80px) rotate(.04deg);">statefulset-</div>
<div class="t" style="font-size:7.9px;color:#404040;transform:translate(370.81px,479.80px) rotate(.04deg) scaleX(0.9941);">groundcov...</div>
<div class="t" style="font-size:7.9px;color:#404040;transform:translate(422.71px,474.90px) rotate(.04deg) scaleX(0.9949);">tstune</div>
<div class="t" style="font-size:7.9px;color:#404040;transform:translate(471.61px,474.90px) rotate(.04deg) scaleX(0.9905);">public.ecr.aws</div>
<div class="t" style="font-size:7.9px;color:#404040;transform:translate(526.52px,474.90px) rotate(.04deg) scaleX(0.9722);">public.ecr.aws/groundcovercom/timescaledb-ha:pg13.8-ts2.8.1-p3</div>
<div class="badge" style="left:926.7px;top:469.7px"></div><div class="bb" style="left:926.7px;top:469.5px;background:#f0245e"></div>
<div class="t" style="font-size:8.4px;color:#3c3c3c;-webkit-text-stroke:0.28px #3c3c3c;transform:translate(940.98px,474.20px) rotate(.04deg);">1</div>
<div class="badge" style="left:963.1px;top:469.7px"></div><div class="bb" style="left:963.1px;top:469.5px;background:#ff6f8b"></div>
<div class="t" style="font-size:8.4px;color:#3c3c3c;-webkit-text-stroke:0.28px #3c3c3c;transform:translate(977.38px,474.20px) rotate(.04deg);">3</div>
<div class="badge" style="left:999.5px;top:469.7px"></div><div class="bb" style="left:999.5px;top:469.5px;background:#1a35a0"></div>
<div class="t" style="font-size:8.4px;color:#3c3c3c;letter-spacing:0.612px;-webkit-text-stroke:0.28px #3c3c3c;transform:translate(1011.33px,474.20px) rotate(.04deg);">57</div>
<div class="badge" style="left:1035.9px;top:469.7px"></div><div class="bb" style="left:1035.9px;top:469.5px;background:#1fbfb3"></div>
<div class="t" style="font-size:8.4px;color:#3c3c3c;letter-spacing:0.612px;-webkit-text-stroke:0.28px #3c3c3c;transform:translate(1047.73px,474.20px) rotate(.04deg);">27</div>
<div class="badge" style="left:1072.3px;top:469.7px"></div><div class="bb" style="left:1072.3px;top:469.5px;background:#a5dfe9"></div>
<div class="t" style="font-size:8.4px;color:#3c3c3c;letter-spacing:0.612px;-webkit-text-stroke:0.28px #3c3c3c;transform:translate(1084.13px,474.20px) rotate(.04deg);">27</div>
<div class="a" style="left:174.500px;top:510.4px;width:10.400px;height:10.400px;border-radius:5.200px;background:#c6f0ed;border:1px solid #62d1c8"></div>
<div class="t" style="font-size:7.9px;color:#404040;transform:translate(206.73px,507.20px) rotate(.04deg) scaleX(0.9280);">Feb 2, 2023</div>
<div class="t" style="font-size:7.9px;color:#404040;transform:translate(206.71px,517.20px) rotate(.04deg) scaleX(0.9828);">17:51:27</div>
<div class="t" style="font-size:7.9px;color:#404040;transform:translate(275.73px,507.20px) rotate(.04deg) scaleX(0.9428);">gke_elated-</div>
<div class="t" style="font-size:7.9px;color:#404040;letter-spacing:0.016px;transform:translate(275.71px,517.20px) rotate(.04deg);">pottery-...</div>
<div class="t" style="font-size:7.9px;color:#404040;transform:translate(320.21px,512.30px) rotate(.04deg) scaleX(0.9958);">groundcover</div>
<div class="t" style="font-size:7.9px;color:#404040;letter-spacing:0.044px;transform:translate(370.81px,507.20px) rotate(.04deg);">statefulset-</div>
<div class="t" style="font-size:7.9px;color:#404040;transform:translate(370.81px,517.20px) rotate(.04deg) scaleX(0.9941);">groundcov...</div>
<div class="t" style="font-size:7.9px;color:#404040;transform:translate(422.71px,512.30px) rotate(.04deg) scaleX(0.9972);">timescaledb</div>
<div class="t" style="font-size:7.9px;color:#404040;transform:translate(471.61px,512.30px) rotate(.04deg) scaleX(0.9905);">public.ecr.aws</div>
<div class="t" style="font-size:7.9px;color:#404040;transform:translate(526.52px,512.30px) rotate(.04deg) scaleX(0.9722);">public.ecr.aws/groundcovercom/timescaledb-ha:pg13.8-ts2.8.1-p3</div>
<div class="badge" style="left:926.7px;top:507.1px"></div><div class="bb" style="left:926.7px;top:506.9px;background:#f0245e"></div>
<div class="t" style="font-size:8.4px;color:#3c3c3c;-webkit-text-stroke:0.28px #3c3c3c;transform:translate(940.98px,511.60px) rotate(.04deg);">1</div>
<div class="badge" style="left:963.1px;top:507.1px"></div><div class="bb" style="left:963.1px;top:506.9px;background:#ff6f8b"></div>
<div class="t" style="font-size:8.4px;color:#3c3c3c;-webkit-text-stroke:0.28px #3c3c3c;transform:translate(977.38px,511.60px) rotate(.04deg);">3</div>
<div class="badge" style="left:999.5px;top:507.1px"></div><div class="bb" style="left:999.5px;top:506.9px;background:#1a35a0"></div>
<div class="t" style="font-size:8.4px;color:#3c3c3c;letter-spacing:0.612px;-webkit-text-stroke:0.28px #3c3c3c;transform:translate(1011.33px,511.60px) rotate(.04deg);">57</div>
<div class="badge" style="left:1035.9px;top:507.1px"></div><div class="bb" style="left:1035.9px;top:506.9px;background:#1fbfb3"></div>
<div class="t" style="font-size:8.4px;color:#3c3c3c;letter-spacing:0.612px;-webkit-text-stroke:0.28px #3c3c3c;transform:translate(1047.73px,511.60px) rotate(.04deg);">27</div>
<div class="badge" style="left:1072.3px;top:507.1px"></div><div class="bb" style="left:1072.3px;top:506.9px;background:#a5dfe9"></div>
<div class="t" style="font-size:8.4px;color:#3c3c3c;letter-spacing:0.612px;-webkit-text-stroke:0.28px #3c3c3c;transform:translate(1084.13px,511.60px) rotate(.04deg);">27</div>
<div class="a" style="left:1107px;top:148.800px;width:3px;height:37.500px;background:#9b9b9b;border-radius:1px"></div>
</div></body></html>
